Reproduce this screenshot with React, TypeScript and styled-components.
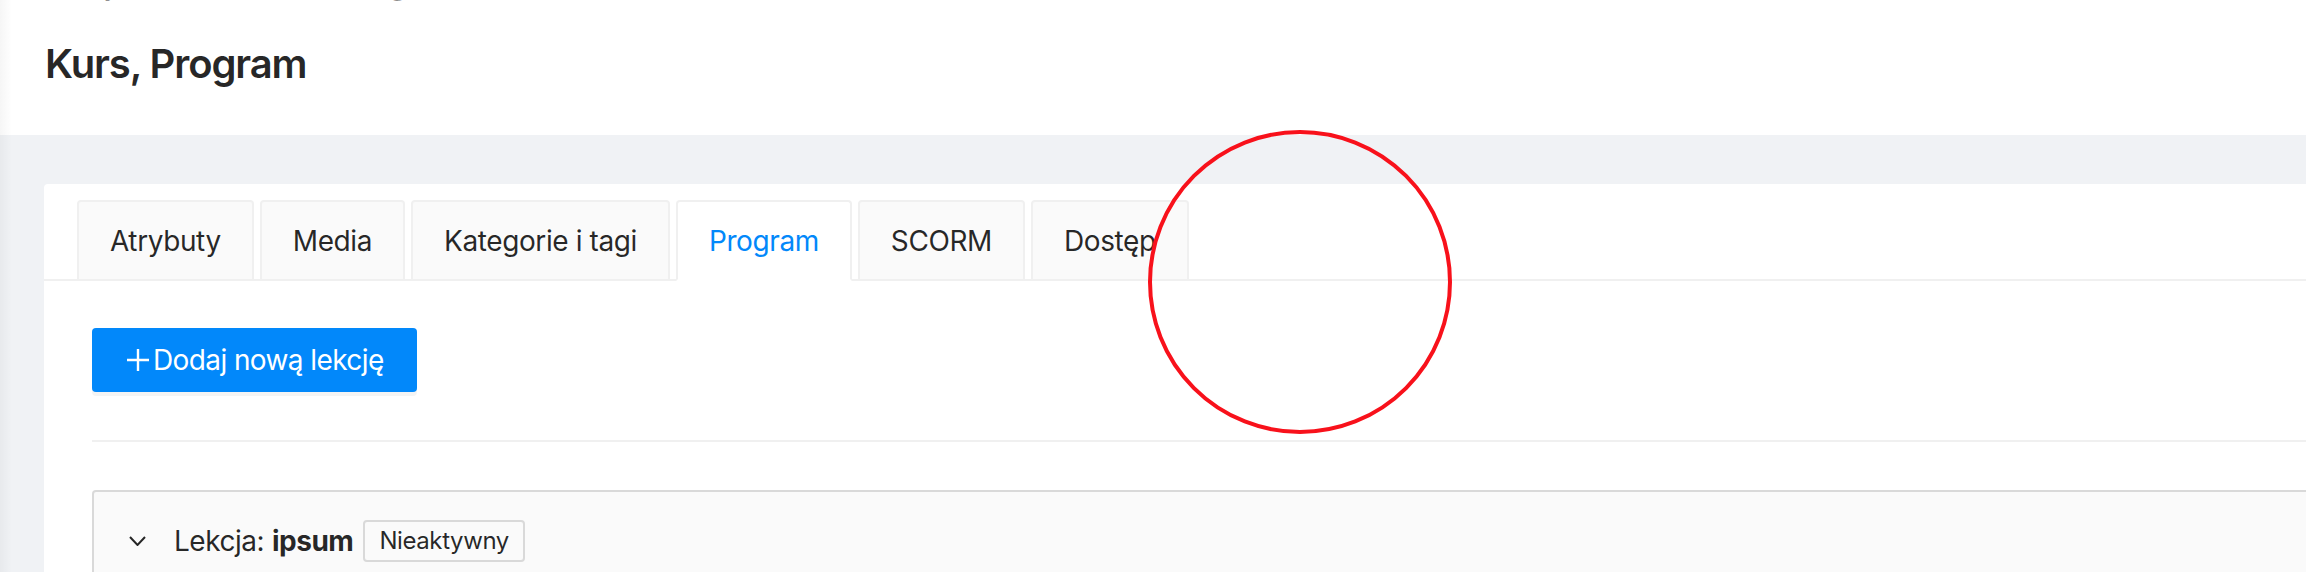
import styled, { createGlobalStyle } from "styled-components";

const GlobalStyle = createGlobalStyle`
    html, body {
        margin: 0;
        padding: 0;
        background: #f0f2f5;
        overflow: hidden;
    }
    * {
        box-sizing: border-box;
    }
    body {
        font-family: Inter, "Noto Sans", "Liberation Sans", sans-serif;
        color: rgba(0, 0, 0, 0.85);
    }
`;

const Page = styled.div`
    position: relative;
    min-height: 572px;
    background: #f0f2f5;
    &::before{
        content: "";
        position: absolute;
        left: 0;
        top: 0;
        bottom: 0;
        width: 12px;
        background: linear-gradient(to right, rgba(0, 0, 0, 0.035), rgba(0, 0, 0, 0));
        pointer-events: none;
        z-index: 2;
    }
`;

// red annotation ring drawn over the screenshot
const Highlight = styled.div`
    position: absolute;
    left: 1148px;
    top: 130px;
    width: 304px;
    height: 304px;
    border: 4px solid #f8111b;
    border-radius: 50%;
    pointer-events: none;
    z-index: 3;
`;

const Header = styled.header`
    background: #ffffff;
    height: 135px;
    padding-left: 45px;
    overflow: hidden;
`;

const Breadcrumb = styled.div`
    display: flex;
    gap: 16px;
    margin-top: -37px;
    height: 44px;
    line-height: 44px;
    font-size: 28px;
    letter-spacing: -0.3px;
    color: rgba(0, 0, 0, 0.45);
`;

const Title = styled.h1`
    margin: 29px 0 0;
    font-size: 40px;
    line-height: 56px;
    font-weight: 600;
    letter-spacing: -1.1px;
    color: rgba(0, 0, 0, 0.85);
`;

const Main = styled.main`
    padding: 49px 0 0 44px;
`;

const Card = styled.section`
    background: #ffffff;
    margin-right: -60px;
    border-radius: 4px 0 0 0;
    min-height: 400px;
`;

const TabBar = styled.nav`
    display: flex;
    gap: 6px;
    padding: 16px 0 0 33px;
    border-bottom: 2px solid #f0f0f0;
`;

const Tab = styled.div<{ $active?: boolean }>`
    height: 81px;
    margin-bottom: -2px;
    padding: 0 31px;
    display: flex;
    align-items: center;
    font-size: 28px;
    color: ${(p) => (p.$active ? "#0288fa" : "rgba(0, 0, 0, 0.85)")};
    background: ${(p) => (p.$active ? "#ffffff" : "#fafafa")};
    border: 2px solid #f0f0f0;
    border-bottom-color: ${(p) => (p.$active ? "#ffffff" : "#f0f0f0")};
    border-radius: 4px 4px 0 0;
    letter-spacing: -0.4px;
`;

const Body = styled.div`
    padding: 47px 0 0 48px;
`;

const AddButton = styled.button`
    height: 64px;
    padding: 0 33px 0 34px;
    display: inline-flex;
    align-items: center;
    gap: 3px;
    background: #0288fa;
    color: #ffffff;
    border: none;
    border-radius: 4px;
    font-family: inherit;
    font-size: 28px;
    letter-spacing: -0.6px;
    box-shadow: 0 4px 0 rgba(0, 0, 0, 0.045);
    cursor: pointer;
`;

const Divider = styled.hr`
    margin: 48px 0;
    border: none;
    height: 2px;
    background: #f0f0f0;
`;

const Collapse = styled.div`
    border: 2px solid #d9d9d9;
    border-bottom: none;
    border-radius: 4px 0 0 0;
    background: #fafafa;
`;

const PanelHeader = styled.div`
    display: flex;
    align-items: center;
    padding: 27px 32px 24px 35px;
    font-size: 28px;
    line-height: 44px;
    letter-spacing: -0.5px;
`;

const Arrow = styled.svg`
    width: 17px;
    height: 10px;
    margin-right: 28px;
`;

const Strong = styled.b`
    font-weight: 700;
    margin-left: 8px;
`;

const Tag = styled.span`
    margin-left: 10px;
    padding: 0 14px;
    font-size: 24px;
    line-height: 38px;
    letter-spacing: -0.4px;
    border: 2px solid #d9d9d9;
    border-radius: 4px;
    background: #fafafa;
    color: rgba(0, 0, 0, 0.85);
`;

const tabs = ["Atrybuty", "Media", "Kategorie i tagi", "Program", "SCORM", "Dostęp"];

export default function App() {
    return (
        <Page>
            <GlobalStyle />
            <Header>
                <Breadcrumb>
                    <span>Kursy</span>
                    <span>/</span>
                    <span>Ustawienia</span>
                    <span>/</span>
                    <span>Program</span>
                </Breadcrumb>
                <Title>Kurs, Program</Title>
            </Header>
            <Main>
                <Card>
                    <TabBar>
                        {tabs.map((t) => (
                            <Tab key={t} $active={t === "Program"}>{t}</Tab>
                        ))}
                    </TabBar>
                    <Body>
                        <AddButton>
                            <svg width="24" height="24" viewBox="0 0 24 24">
                                <path d="M12 1v22M1 12h22" stroke="#ffffff" strokeWidth="2.4" fill="none" />
                            </svg>
                            <span>Dodaj nową lekcję</span>
                        </AddButton>
                        <Divider />
                        <Collapse>
                            <PanelHeader>
                                <Arrow viewBox="0 0 17 10">
                                    <path d="M1 1l7.5 8L16 1" stroke="#262626" strokeWidth="2" fill="none" />
                                </Arrow>
                                <span>Lekcja:</span>
                                <Strong>ipsum</Strong>
                                <Tag>Nieaktywny</Tag>
                            </PanelHeader>
                        </Collapse>
                    </Body>
                </Card>
            </Main>
            <Highlight />
        </Page>
    );
}
